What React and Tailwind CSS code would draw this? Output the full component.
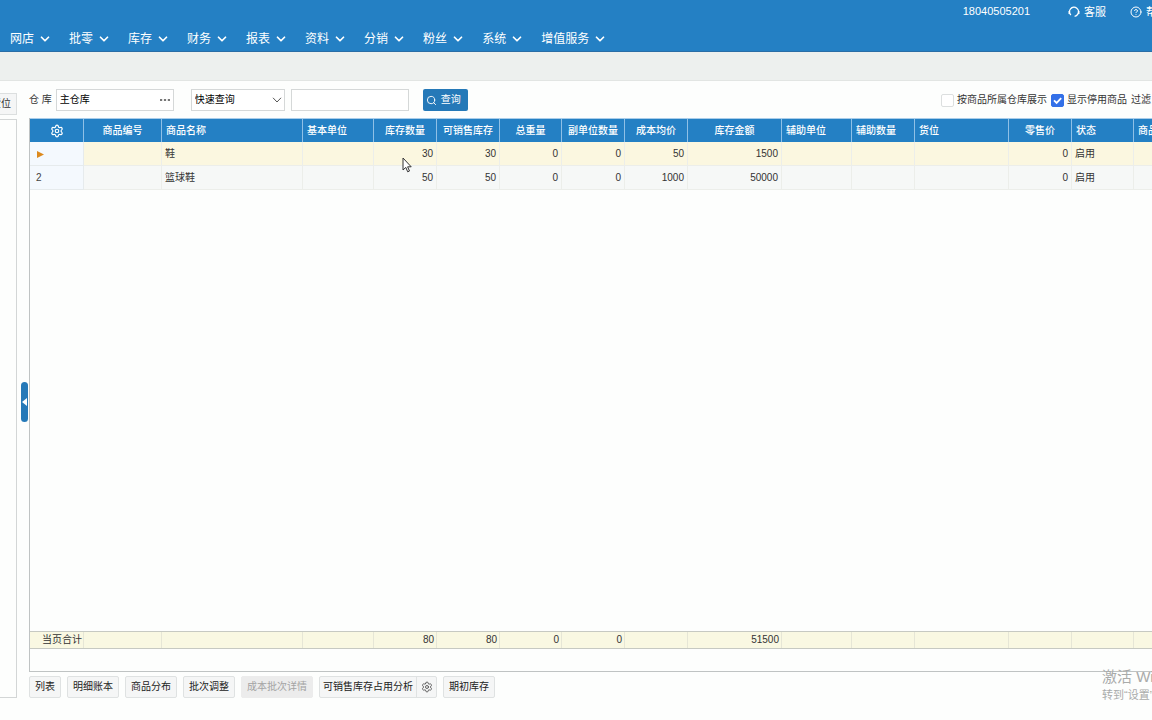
import { useState } from 'react';
import { ChevronDown, CircleHelp, Search, Settings } from 'lucide-react';
import clsx from 'clsx';

const MENUS = ['网店', '批零', '库存', '财务', '报表', '资料', '分销', '粉丝', '系统', '增值服务'];

// align = header alignment, num = right-aligned body cells
const COLUMNS = [
  { key: 'code', title: '商品编号', col: 'w-[78px]', align: 'text-center' },
  { key: 'name', title: '商品名称', col: 'w-[141px]', align: 'text-left' },
  { key: 'unit', title: '基本单位', col: 'w-[71px]', align: 'text-left' },
  { key: 'stock', title: '库存数量', col: 'w-[63px]', align: 'text-center', num: true },
  { key: 'sellable', title: '可销售库存', col: 'w-[63px]', align: 'text-center', num: true },
  { key: 'weight', title: '总重量', col: 'w-[62px]', align: 'text-center', num: true },
  { key: 'subQty', title: '副单位数量', col: 'w-[63px]', align: 'text-center', num: true },
  { key: 'cost', title: '成本均价', col: 'w-[63px]', align: 'text-center', num: true },
  { key: 'amount', title: '库存金额', col: 'w-[94px]', align: 'text-center', num: true },
  { key: 'auxUnit', title: '辅助单位', col: 'w-[70px]', align: 'text-left' },
  { key: 'auxQty', title: '辅助数量', col: 'w-[63px]', align: 'text-left' },
  { key: 'slot', title: '货位', col: 'w-[94px]', align: 'text-left' },
  { key: 'price', title: '零售价', col: 'w-[63px]', align: 'text-center', num: true },
  { key: 'status', title: '状态', col: 'w-[62px]', align: 'text-left' },
  { key: 'extra', title: '商品分类', col: 'w-[78px]', align: 'text-left' },
];

const ROWS = [
  { name: '鞋', stock: 30, sellable: 30, weight: 0, subQty: 0, cost: 50, amount: 1500, price: 0, status: '启用' },
  { name: '篮球鞋', stock: 50, sellable: 50, weight: 0, subQty: 0, cost: 1000, amount: 50000, price: 0, status: '启用' },
];

const TOTALS = { stock: 80, sellable: 80, weight: 0, subQty: 0, amount: 51500 };

function Columns() {
  return (
    <colgroup>
      <col className="w-[54px]" />
      {COLUMNS.map((c) => <col key={c.key} className={c.col} />)}
    </colgroup>
  );
}

function TopBar() {
  return (
    <header className="shrink-0 overflow-hidden border-b border-[#2a6ea6] bg-[#2480c4] text-white">
      <div className="-mr-4 flex h-6 items-center justify-end whitespace-nowrap text-[11px]">
        <span className="mr-[38px] pb-[3px]">18040505201</span>
        <a href="#service" className="mr-6 flex items-center gap-1">
          <svg viewBox="0 0 14 14" className="h-3 w-3" fill="none" stroke="currentColor" strokeWidth="1.5" aria-hidden>
            <path d="M3.4 10.6A5.3 5.3 0 1 1 11.3 9.8c-.8 1.3-1.8 2-3.6 2.3" />
            <path d="M1.6 5.8v3.4M12.4 5.8v3.4" strokeWidth="2" />
          </svg>
          客服
        </a>
        <a href="#help" className="flex items-center gap-1">
          <CircleHelp className="h-3 w-3" aria-hidden />
          帮助
        </a>
      </div>
      <nav className="flex h-[27px] items-center gap-[17px] whitespace-nowrap pl-[10px] pt-[2px] text-[12px]">
        {MENUS.map((m) => (
          <button key={m} type="button" className="flex items-center gap-[4px]">
            {m}
            <ChevronDown className="h-[14px] w-[14px]" strokeWidth={3} aria-hidden />
          </button>
        ))}
      </nav>
    </header>
  );
}

function CheckOption({ label, checked, onChange }) {
  return (
    <label className="flex items-center gap-[3px]">
      <span className="relative flex h-[13px] w-[13px]">
        <input
          type="checkbox"
          checked={checked}
          onChange={onChange}
          className="h-[13px] w-[13px] appearance-none rounded-xs border border-[#dcdfdf] bg-white checked:border-[#3370e8] checked:bg-[#3370e8]"
        />
        {checked ? (
          <svg viewBox="0 0 13 13" className="pointer-events-none absolute inset-0" fill="none" stroke="#fff" strokeWidth="1.8" aria-hidden>
            <path d="M3 6.3l2.6 2.6L10.2 4.2" />
          </svg>
        ) : null}
      </span>
      {label}
    </label>
  );
}

function QueryBar() {
  const [warehouse, setWarehouse] = useState('主仓库');
  const [keyword, setKeyword] = useState('');
  const [byWarehouse, setByWarehouse] = useState(false);
  const [showDisabled, setShowDisabled] = useState(true);

  return (
    <form className="flex h-[22px] shrink-0 items-center whitespace-nowrap" onSubmit={(e) => e.preventDefault()}>
      <label htmlFor="warehouse" className="mr-[4px]">仓 库</label>
      <div className="flex h-full w-[118px] items-center border border-[#d5d8d8] bg-white">
        <input
          id="warehouse"
          value={warehouse}
          onChange={(e) => setWarehouse(e.target.value)}
          className="min-w-0 flex-1 pl-[3px] text-black outline-none"
        />
        <button type="button" aria-label="选择仓库" className="flex w-4 justify-center">
          <svg viewBox="0 0 10 2" className="h-[2px] w-[10px]" fill="#777" aria-hidden>
            <path d="M0 0h2.2v2H0zM3.9 0h2.2v2H3.9zM7.8 0H10v2H7.8z" />
          </svg>
        </button>
      </div>
      <div className="relative ml-[17px] h-full w-[94px]">
        <select aria-label="查询方式" className="h-full w-full appearance-none border border-[#d5d8d8] bg-white pl-[3px] text-black">
          <option>快速查询</option>
        </select>
        <svg viewBox="0 0 10 6" className="pointer-events-none absolute right-[3px] top-2 h-[6px] w-[10px]" fill="none" stroke="#555" aria-hidden>
          <path d="M1 .8l4 4.2 4-4.2" />
        </svg>
      </div>
      <input
        aria-label="关键字"
        value={keyword}
        onChange={(e) => setKeyword(e.target.value)}
        className="ml-[6px] h-full w-[118px] border border-[#d5d8d8] bg-white px-1"
      />
      <button type="submit" className="ml-[14px] flex h-full w-[45px] items-center gap-[4px] rounded-xs bg-[#2579b8] pl-[3px] text-white">
        <Search className="h-[11px] w-[11px]" aria-hidden />
        查询
      </button>
      <div className="ml-auto flex items-center gap-1 pr-[1px]">
        <CheckOption label="按商品所属仓库展示" checked={byWarehouse} onChange={() => setByWarehouse((v) => !v)} />
        <CheckOption label="显示停用商品" checked={showDisabled} onChange={() => setShowDisabled((v) => !v)} />
        <a href="#filter">过滤</a>
      </div>
    </form>
  );
}

function StockTable() {
  return (
    <div className="flex min-h-0 flex-1 flex-col overflow-hidden border-b border-l border-[#bfc3c3]">
      <table className="w-[1182px] shrink-0 table-fixed border-separate border-spacing-0 border-t border-[#a9cdea]">
        <Columns />
        <thead>
          <tr className="h-[23px] bg-[#2480c4] text-white">
            <th className="border-r border-[#8fc0e6] p-0">
              <button type="button" aria-label="列设置" className="flex w-full justify-center">
                <Settings className="h-[14px] w-[14px]" strokeWidth={2} aria-hidden />
              </button>
            </th>
            {COLUMNS.map((c) => (
              <th
                key={c.key}
                className={clsx('overflow-hidden whitespace-nowrap border-r border-[#8fc0e6] px-1 py-0 font-medium', c.align)}
              >
                {c.title}
              </th>
            ))}
          </tr>
        </thead>
        <tbody>
          {ROWS.map((row, i) => (
            <tr key={row.name} className={clsx('h-6', i === 0 ? 'bg-[#fbf7e0]' : 'bg-[#f6f8f7]')}>
              <td className="border-b border-r border-[#e6ebed] bg-[#f4f9fe] px-[6px] pb-0 pt-[1px] text-[#444]">
                {i === 0 ? (
                  <svg viewBox="0 0 8 8" className="ml-[1px] h-[7px] w-[7px]" fill="#dc8a1e" aria-hidden>
                    <path d="M0 0l8 4-8 4z" />
                  </svg>
                ) : i + 1}
              </td>
              {COLUMNS.map((c) => (
                <td
                  key={c.key}
                  className={clsx('border-b border-r border-[#eceeea] pb-0 pt-[1px]', c.num ? 'pr-[3px] text-right' : 'pl-[3px]')}
                >
                  {row[c.key]}
                </td>
              ))}
            </tr>
          ))}
        </tbody>
      </table>
      <div className="flex-1" />
      <table className="mb-[22px] w-[1182px] shrink-0 table-fixed border-separate border-spacing-0 border-y border-[#c6c9c2]">
        <Columns />
        <tbody>
          <tr className="h-4 bg-[#f9f8e2]">
            <th scope="row" className="whitespace-nowrap border-r border-[#e6e6d6] p-0 pr-[1px] text-right font-normal">当页合计</th>
            {COLUMNS.map((c) => (
              <td key={c.key} className={clsx('border-r border-[#e6e6d6] py-0', c.num && 'pr-[2px] text-right')}>
                {TOTALS[c.key]}
              </td>
            ))}
          </tr>
        </tbody>
      </table>
    </div>
  );
}

function FooterButton({ children, disabled }) {
  return (
    <button
      type="button"
      disabled={disabled}
      className="h-[22px] rounded-xs border border-[#dfe2e2] bg-[#f5f6f6] px-[5px] text-[#222] disabled:border-[#ececec] disabled:bg-[#ececec] disabled:text-[#a3a3a3]"
    >
      {children}
    </button>
  );
}

function FooterBar() {
  return (
    <div className="mt-1 flex shrink-0 items-center gap-[6px] whitespace-nowrap">
      <FooterButton>列表</FooterButton>
      <FooterButton>明细账本</FooterButton>
      <FooterButton>商品分布</FooterButton>
      <FooterButton>批次调整</FooterButton>
      <FooterButton disabled>成本批次详情</FooterButton>
      <div className="flex h-[22px] rounded-xs border border-[#dfe2e2] bg-[#f5f6f6] text-[#222]">
        <button type="button" className="px-[3px]">可销售库存占用分析</button>
        <button type="button" aria-label="分析设置" className="flex w-5 items-center justify-center border-l border-[#dfe2e2] text-[#555]">
          <Settings className="h-3 w-3" strokeWidth={1.8} aria-hidden />
        </button>
      </div>
      <FooterButton>期初库存</FooterButton>
    </div>
  );
}

export default function App() {
  return (
    <div className="relative flex h-screen flex-col overflow-hidden bg-[#fdfefd] font-['Liberation_Sans','Noto_Sans_CJK_SC',sans-serif] text-[10px] leading-4 text-[#333]">
      <TopBar />
      <div className="h-[29px] shrink-0 border-b border-[#e2e5e3] bg-[#edf0ee]" />
      <div className="flex min-h-0 flex-1 pb-[22px] pt-2">
        <aside className="mt-1 flex w-[17px] shrink-0 flex-col">
          <button type="button" className="flex h-[22px] justify-end overflow-hidden whitespace-nowrap border border-l-0 border-[#dcdfdf] bg-[#f5f6f6] pr-[5px] leading-5">
            货位
          </button>
          <div className="mt-1 flex-1 border border-l-0 border-[#d3d6d6]" />
        </aside>
        <div className="flex w-3 shrink-0 items-center justify-center pl-[2px] pt-4">
          <button type="button" aria-label="收起" className="flex h-10 w-[7px] items-center justify-center rounded-full bg-[#2579b8]">
            <svg viewBox="0 0 5 8" className="h-2 w-[5px]" fill="#fff" aria-hidden>
              <path d="M5 0v8L0 4z" />
            </svg>
          </button>
        </div>
        <main className="flex min-w-0 flex-1 flex-col gap-[7px]">
          <QueryBar />
          <div className="flex min-h-0 flex-1 flex-col">
            <StockTable />
            <FooterBar />
          </div>
        </main>
      </div>

      {/* mouse pointer */}
      <svg viewBox="0 0 10 16" className="pointer-events-none absolute left-[402px] top-[157px] h-4 w-[10px]" fill="#fff" stroke="#333" aria-hidden>
        <path d="M1 1v12l2.8-2.6 1.9 4.4 1.8-.8-1.9-4.2h3.6z" />
      </svg>

      {/* Windows activation watermark */}
      <div className="pointer-events-none absolute left-[1102px] top-[667px] whitespace-nowrap text-[#a9abaa]">
        <p className="text-[15px] leading-5">激活 Windows</p>
        <p className="text-[11px] leading-4">转到“设置”以激活 Windows。</p>
      </div>
    </div>
  );
}
